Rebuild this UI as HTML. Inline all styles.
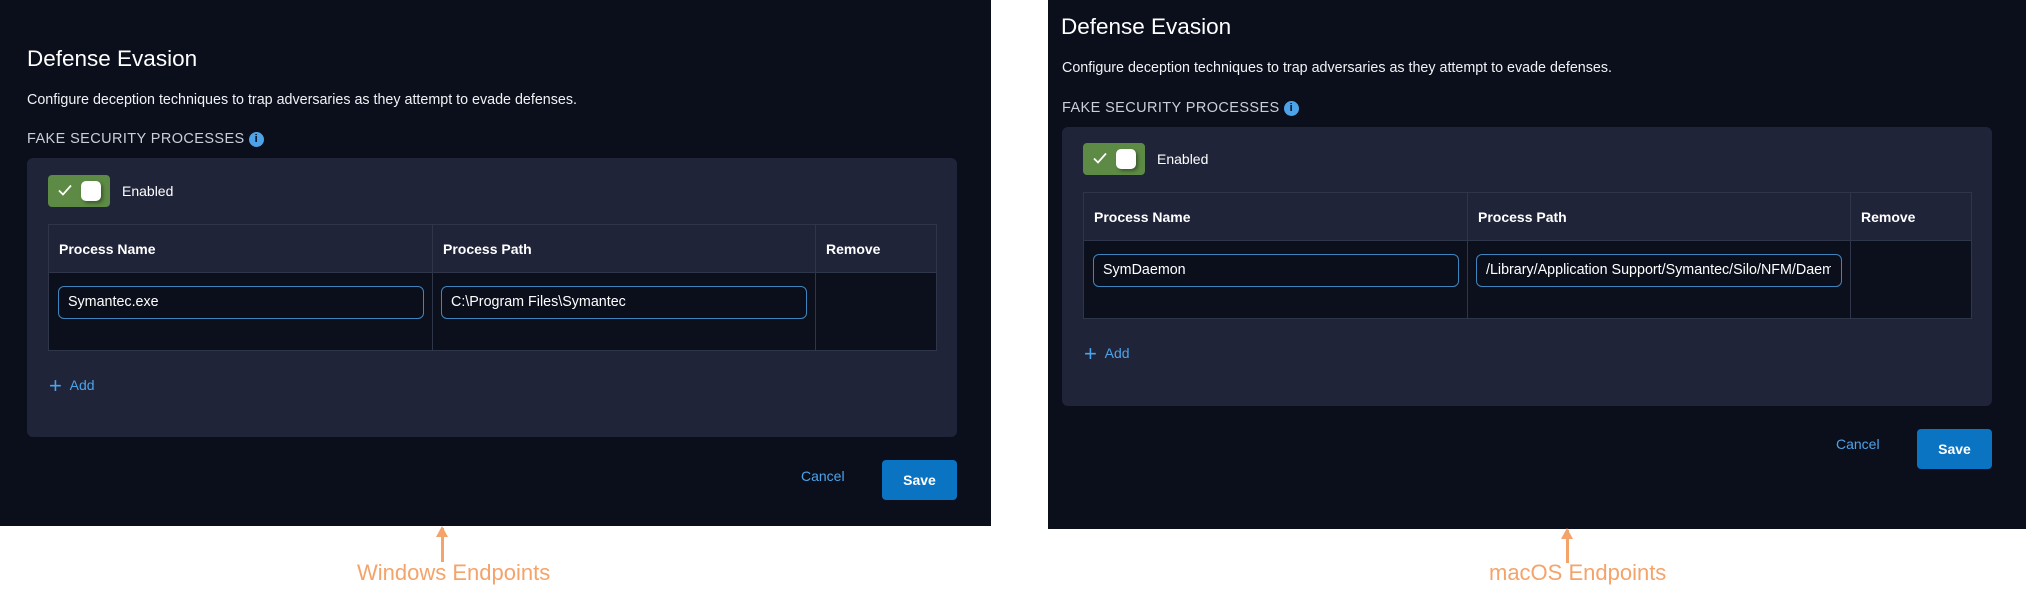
<!DOCTYPE html>
<html><head><meta charset="utf-8">
<style>
*{margin:0;padding:0;box-sizing:border-box}
body{width:2026px;height:611px;background:#fff;position:relative;overflow:hidden;font-family:"Liberation Sans",sans-serif}
.panel{position:absolute;background:#0b0f1b}
.a{position:absolute}
.title{color:#fff;font-size:22.5px;white-space:nowrap}
.desc{color:#f0f2f5;font-size:14.3px;white-space:nowrap}
.fake{color:#c9ced8;font-size:14.5px;letter-spacing:0.4px;white-space:nowrap}
.info{display:inline-block;width:15px;height:15px;border-radius:50%;background:#4da3ea;color:#0b0f1b;font-size:11px;font-weight:bold;text-align:center;line-height:15px;vertical-align:1px;letter-spacing:0;margin-left:4px}
.card{background:#1f2439;border-radius:6px}
.toggle{background:#5d8a45;border-radius:4px}
.knob{position:absolute;right:9px;top:6px;width:20px;height:20px;background:#fff;border-radius:5px;box-shadow:2px 2px 3px rgba(0,0,0,.35)}
.ck{position:absolute;left:10px;top:7px;width:14px;height:16px}
.en{color:#fff;font-size:14px}
table{border-collapse:collapse;position:absolute}
td,th{border:1px solid #30364a;text-align:left;font-weight:bold;color:#fff;font-size:14px;padding-left:10px}
th{background:#1f2439}
td{background:#0c101c;vertical-align:top}
.inp{position:absolute;border:1px solid #3f85bd;border-radius:6px;background:#0b0f1b;color:#fff;font-size:14.3px;padding-left:9px;white-space:nowrap;overflow:hidden}
.inp span{display:block;overflow:hidden;width:345px;line-height:31px;height:31px}
.add{color:#4da3ea;font-size:14px}
.cancel{color:#4da3ea;font-size:14px}
.save{background:#0a73c2;border-radius:4px;color:#fff;font-size:14px;font-weight:bold;text-align:center}
.lbl{color:#f4a36a;font-size:22px;white-space:nowrap}
.arr{position:absolute;width:3px;background:#f4a36a}
.arr:before{content:"";position:absolute;left:-5px;top:-2px;border-left:6.5px solid transparent;border-right:6.5px solid transparent;border-bottom:11px solid #f4a36a}
</style></head><body>

<!-- LEFT -->
<div class="panel" style="left:0;top:0;width:991px;height:526px"></div>
<div class="a title" style="left:27px;top:46px">Defense Evasion</div>
<div class="a desc" style="left:27px;top:92px">Configure deception techniques to trap adversaries as they attempt to evade defenses.</div>
<div class="a fake" style="left:27px;top:131px">FAKE SECURITY PROCESSES<span class="info">i</span></div>
<div class="a card" style="left:27px;top:158px;width:930px;height:279px"></div>
<div class="a toggle" style="left:48px;top:175px;width:62px;height:32px"><svg class="ck" viewBox="0 0 14 16"><path d="M1 8.5 L5 12.5 L13 3.5" fill="none" stroke="#fff" stroke-width="1.8"/></svg><div class="knob"></div></div>
<div class="a en" style="left:122px;top:183px">Enabled</div>
<table style="left:48px;top:224px;width:889px">
<tr style="height:48px"><th style="width:384px">Process Name</th><th style="width:383px">Process Path</th><th>Remove</th></tr>
<tr style="height:78px"><td></td><td></td><td></td></tr>
</table>
<div class="inp" style="left:58px;top:286px;width:366px;height:33px"><span>Symantec.exe</span></div>
<div class="inp" style="left:441px;top:286px;width:366px;height:33px"><span>C:\Program Files\Symantec</span></div>
<div class="a add" style="left:49px;top:373px"><span style="font-size:22px;vertical-align:-3px;font-weight:300">+</span>&nbsp;&nbsp;Add</div>
<div class="a cancel" style="left:801px;top:468px">Cancel</div>
<div class="a save" style="left:882px;top:460px;width:75px;height:40px;line-height:40px">Save</div>
<div class="arr" style="left:441px;top:528px;height:34px"></div>
<div class="a lbl" style="left:357px;top:560px">Windows Endpoints</div>

<!-- RIGHT -->
<div class="panel" style="left:1048px;top:0;width:978px;height:529px"></div>
<div class="a title" style="left:1061px;top:14px">Defense Evasion</div>
<div class="a desc" style="left:1062px;top:60px">Configure deception techniques to trap adversaries as they attempt to evade defenses.</div>
<div class="a fake" style="left:1062px;top:100px">FAKE SECURITY PROCESSES<span class="info">i</span></div>
<div class="a card" style="left:1062px;top:127px;width:930px;height:279px"></div>
<div class="a toggle" style="left:1083px;top:143px;width:62px;height:32px"><svg class="ck" viewBox="0 0 14 16"><path d="M1 8.5 L5 12.5 L13 3.5" fill="none" stroke="#fff" stroke-width="1.8"/></svg><div class="knob"></div></div>
<div class="a en" style="left:1157px;top:151px">Enabled</div>
<table style="left:1083px;top:192px;width:889px">
<tr style="height:48px"><th style="width:384px">Process Name</th><th style="width:383px">Process Path</th><th>Remove</th></tr>
<tr style="height:78px"><td></td><td></td><td></td></tr>
</table>
<div class="inp" style="left:1093px;top:254px;width:366px;height:33px"><span>SymDaemon</span></div>
<div class="inp" style="left:1476px;top:254px;width:366px;height:33px"><span>/Library/Application Support/Symantec/Silo/NFM/Daemon</span></div>
<div class="a add" style="left:1084px;top:341px"><span style="font-size:22px;vertical-align:-3px;font-weight:300">+</span>&nbsp;&nbsp;Add</div>
<div class="a cancel" style="left:1836px;top:436px">Cancel</div>
<div class="a save" style="left:1917px;top:429px;width:75px;height:40px;line-height:40px">Save</div>
<div class="arr" style="left:1566px;top:530px;height:33px"></div>
<div class="a lbl" style="left:1489px;top:560px">macOS Endpoints</div>

</body></html>
